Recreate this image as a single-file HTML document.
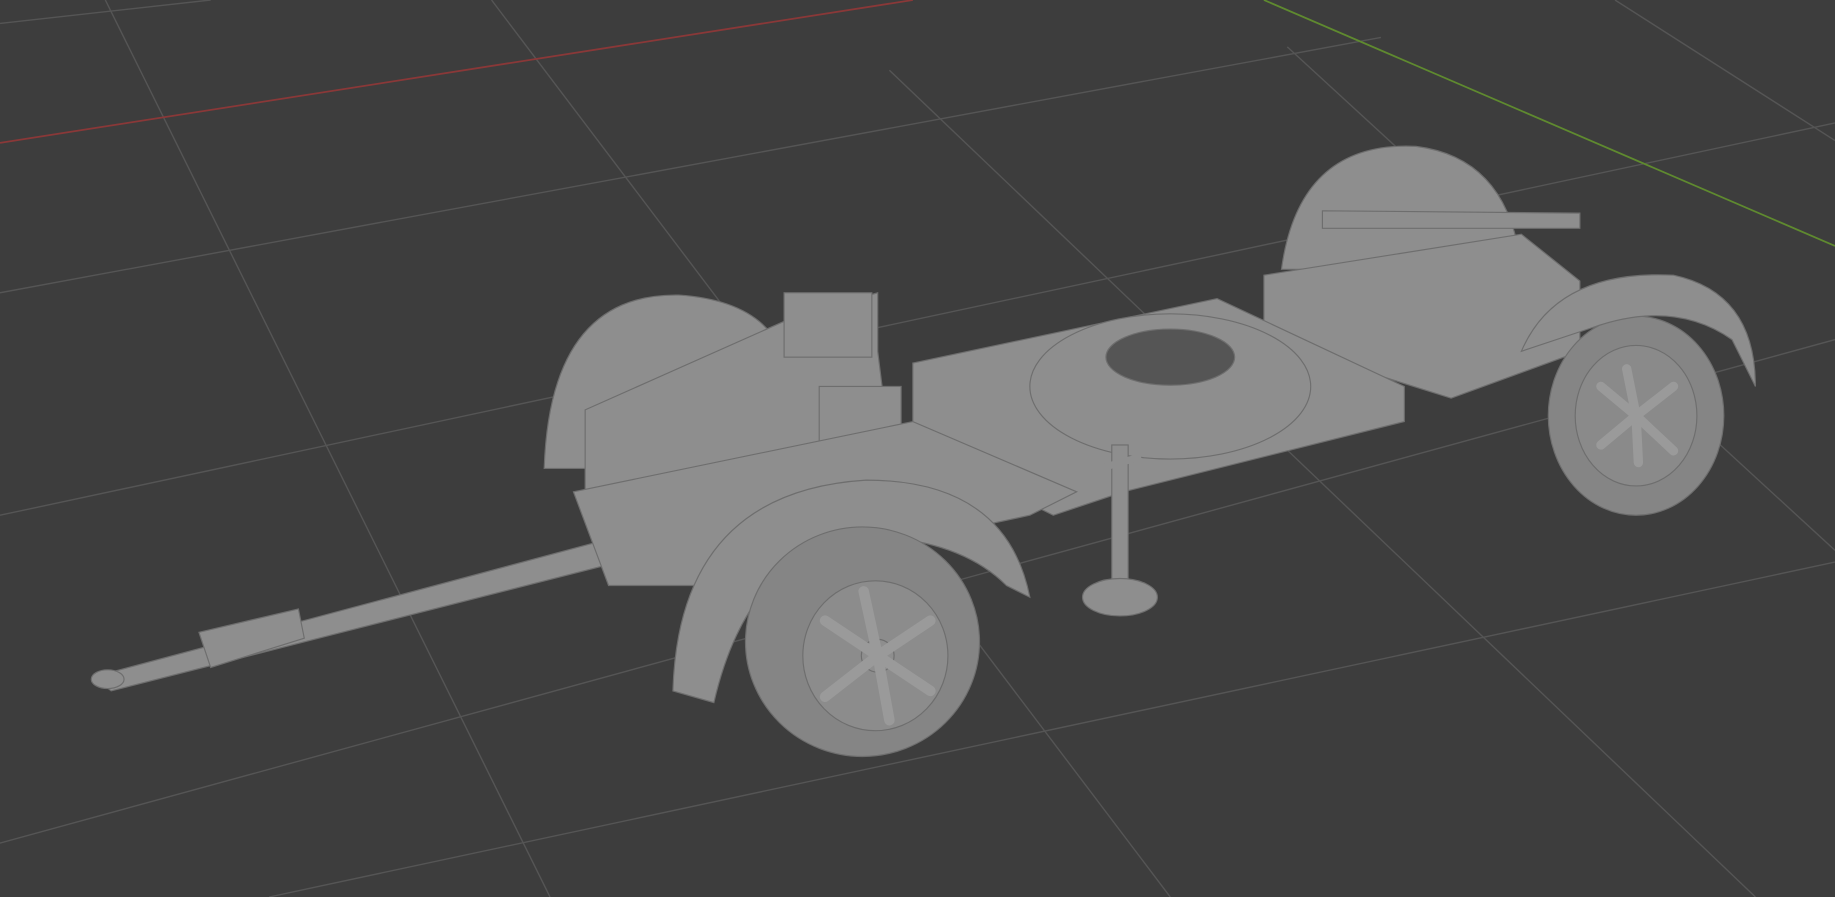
<!DOCTYPE html>
<html><head><style>
html,body{margin:0;padding:0;background:#3d3d3d;overflow:hidden}
svg{display:block}
</style></head><body>
<svg width="1835" height="897" viewBox="0 0 1568 766" preserveAspectRatio="none" xmlns="http://www.w3.org/2000/svg">
<rect width="1568" height="766" fill="#3d3d3d"/>
<g stroke="#555" stroke-width="1.2" fill="none">
<line x1="0" y1="250" x2="1180" y2="32"/>
<line x1="0" y1="440" x2="1568" y2="105"/>
<line x1="0" y1="720" x2="1568" y2="290"/>
<line x1="230" y1="766" x2="1568" y2="480"/>
<line x1="90" y1="0" x2="470" y2="766"/>
<line x1="420" y1="0" x2="1000" y2="766"/>
<line x1="760" y1="60" x2="1500" y2="766"/>
<line x1="1100" y1="40" x2="1568" y2="470"/>
<line x1="1380" y1="0" x2="1568" y2="120"/>
<line x1="0" y1="20" x2="180" y2="0"/>
</g>
<line x1="0" y1="122" x2="780" y2="0" stroke="#8a3838" stroke-width="1.5"/>
<line x1="1080" y1="0" x2="1568" y2="210" stroke="#5f8a2f" stroke-width="1.5"/>
<g fill="#8e8e8e" stroke="#6e6e6e" stroke-width="1">
<!-- rear right fender -->
<path d="M1095,230 Q1110,120 1210,125 Q1290,135 1300,230 Z"/>
<!-- rear right chassis -->
<polygon points="1080,235 1300,200 1350,240 1350,300 1240,340 1080,290"/>
<polygon points="1130,180 1350,182 1350,195 1130,195"/>
<!-- rear right wheel -->
<ellipse cx="1398" cy="355" rx="75" ry="85" fill="#858585"/>
<ellipse cx="1398" cy="355" rx="52" ry="60" fill="#8a8a8a"/>
<path d="M1300,300 Q1330,230 1430,235 Q1500,250 1500,330 L1480,290 Q1430,255 1360,280 Z"/>
<!-- platform -->
<polygon points="780,310 1040,255 1200,330 1200,360 960,420 900,440 780,380"/>
<ellipse cx="1000" cy="330" rx="120" ry="62"/>
<ellipse cx="1000" cy="305" rx="55" ry="24" fill="#555"/>
<!-- rear left fender -->
<path d="M465,400 Q470,250 580,252 Q670,258 675,330 L610,350 L520,400 Z"/>
<polygon points="500,350 680,270 750,250 750,300 760,380 620,420 500,420"/>
<rect x="670" y="250" width="75" height="55"/>
<rect x="700" y="330" width="70" height="55"/>
<!-- drawbar -->
<polygon points="80,578 540,455 548,475 95,590"/>
<polygon points="170,540 255,520 260,545 180,570"/>
<ellipse cx="92" cy="580" rx="14" ry="8"/>
<!-- front frame -->
<polygon points="490,420 780,360 920,420 880,440 600,500 520,500"/>
<!-- jack -->
<rect x="950" y="380" width="14" height="120"/>
<ellipse cx="957" cy="510" rx="32" ry="16"/>
<line x1="940" y1="400" x2="975" y2="390" stroke-width="6" stroke="#8e8e8e"/>
<!-- front fender -->
<path d="M575,590 Q580,420 740,410 Q860,410 880,510 L860,500 Q820,460 740,458 Q640,470 610,600 Z"/>
<!-- front wheel -->
<ellipse cx="737" cy="548" rx="100" ry="98" fill="#858585"/>
<ellipse cx="748" cy="560" rx="62" ry="64" fill="#8c8c8c"/>
<circle cx="750" cy="560" r="14"/>
<g stroke="#9a9a9a" stroke-width="9" stroke-linecap="round">
<line x1="750" y1="560" x2="738" y2="505"/>
<line x1="750" y1="560" x2="795" y2="530"/>
<line x1="750" y1="560" x2="795" y2="590"/>
<line x1="750" y1="560" x2="760" y2="615"/>
<line x1="750" y1="560" x2="705" y2="595"/>
<line x1="750" y1="560" x2="705" y2="530"/>
</g>
<g stroke="#9a9a9a" stroke-width="8" stroke-linecap="round">
<line x1="1398" y1="355" x2="1390" y2="315"/>
<line x1="1398" y1="355" x2="1430" y2="330"/>
<line x1="1398" y1="355" x2="1430" y2="385"/>
<line x1="1398" y1="355" x2="1400" y2="395"/>
<line x1="1398" y1="355" x2="1368" y2="380"/>
<line x1="1398" y1="355" x2="1368" y2="330"/>
</g>
</g>
</svg>
</body></html>
